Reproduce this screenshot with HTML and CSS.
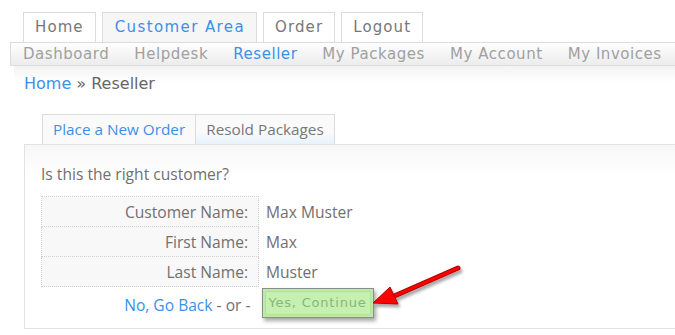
FILE: index.html
```html
<!DOCTYPE html>
<html>
<head>
<meta charset="utf-8">
<link rel="stylesheet" href="styles.css">
</head>
<body>
<div class="page">
  <ul class="topnav">
    <li class="tab">Home</li>
    <li class="tab active">Customer Area</li>
    <li class="tab">Order</li>
    <li class="tab">Logout</li>
  </ul>
  <ul class="subnav">
    <li>Dashboard</li>
    <li>Helpdesk</li>
    <li class="current">Reseller</li>
    <li>My Packages</li>
    <li>My Account</li>
    <li>My Invoices</li>
  </ul>
  <div class="shade"></div>
  <div class="crumbs"><a class="link">Home</a> » Reseller</div>
  <ul class="subtabs">
    <li class="stab sel">Place a New Order</li>
    <li class="stab other">Resold Packages</li>
  </ul>
  <div class="box">
    <p class="question">Is this the right customer?</p>
    <table class="info">
      <tr><th>Customer Name:</th><td>Max Muster</td></tr>
      <tr><th>First Name:</th><td>Max</td></tr>
      <tr><th>Last Name:</th><td>Muster</td></tr>
      <tr class="actions">
        <th><a class="link">No, Go Back</a> - or -</th>
        <td><span class="btn"><span class="btn-in">Yes, Continue</span></span></td>
      </tr>
    </table>
  </div>
  <svg class="arrow" width="110" height="60" viewBox="0 0 110 60">
    <defs>
      <filter id="sh" x="-20%" y="-20%" width="150%" height="150%">
        <feGaussianBlur in="SourceAlpha" stdDeviation="1.5"/>
        <feOffset dx="2" dy="3" result="b"/>
        <feComponentTransfer><feFuncA type="linear" slope="0.35"/></feComponentTransfer>
        <feMerge><feMergeNode/><feMergeNode in="SourceGraphic"/></feMerge>
      </filter>
    </defs>
    <g filter="url(#sh)">
      <line x1="98" y1="13" x2="32" y2="42" stroke="#b00000" stroke-width="5" stroke-linecap="round"/>
      <line x1="98" y1="13" x2="32" y2="42" stroke="#ff0000" stroke-width="3" stroke-linecap="round"/>
      <polygon points="13,48 30,32 38,49" fill="#ff0000" stroke="#b00000" stroke-width="1" stroke-linejoin="round"/>
    </g>
  </svg>
</div>
</body>
</html>
```

FILE: styles.css
```css
html, body {
  margin: 0;
  padding: 0;
  background: #fff;
  overflow: hidden;
}
.page {
  position: relative;
  width: 675px;
  height: 335px;
  overflow: hidden;
  font-family: "DejaVu Sans", sans-serif;
}
ul {
  list-style: none;
  margin: 0;
  padding: 0;
}
.topnav {
  display: flex;
  gap: 6px;
  padding: 12px 0 0 23px;
}
.tab {
  box-sizing: border-box;
  height: 30px;
  padding: 0 11px;
  border: 1px solid #dcdcdc;
  border-bottom: none;
  background: #fff;
  color: #777;
  font-size: 15px;
  letter-spacing: 1.1px;
  line-height: 28px;
}
.tab.active {
  background: #f6f6f6;
  color: #3d8fe8;
  padding: 0 11px 0 12px;
  letter-spacing: 1.4px;
}
.subnav {
  display: flex;
  margin-left: 10px;
  height: 24px;
  box-sizing: border-box;
  border: 1px solid #dcdcdc;
  border-right: none;
  background: linear-gradient(#ffffff, #f3f3f3 60%, #ececec);
  padding-left: 12px;
  gap: 25px;
  font-size: 15px;
  letter-spacing: 0.55px;
  line-height: 22px;
  color: #a0a0a0;
  white-space: nowrap;
}
.subnav .current {
  color: #3d8fe8;
}
.shade {
  margin-left: 14px;
  height: 16px;
  background: linear-gradient(#f2f2f2, #ffffff);
}
.crumbs {
  margin: -8px 0 0 24px;
  font-size: 16px;
  line-height: 20px;
  color: #666;
}
.link {
  color: #3d8fe8;
}
.subtabs {
  display: flex;
  margin: 20px 0 0 42px;
  font-family: "Open Sans", sans-serif;
  font-size: 15.3px;
}
.stab {
  box-sizing: border-box;
  height: 30px;
  line-height: 28px;
  border: 1px solid #dcdcdc;
  border-bottom: none;
  padding: 0 10px;
}
.stab.sel {
  background: #fafafa;
  color: #3d8fe8;
}
.stab.other {
  border-left: none;
  color: #777;
  background: linear-gradient(#fafafa 60%, #e6f2fc);
}
.box {
  box-sizing: border-box;
  margin-left: 24px;
  width: 700px;
  height: 185px;
  border: 1px solid #e2e2e2;
  background: linear-gradient(#f7f7f7, #ffffff 30px);
  padding: 18px 0 0 16px;
  font-family: "Open Sans", sans-serif;
  font-size: 15.6px;
  color: #707070;
}
.question {
  margin: 0 0 11px 0;
  line-height: 22px;
}
.info {
  border-collapse: collapse;
}
.info th {
  box-sizing: border-box;
  width: 217px;
  height: 30px;
  padding: 0 10px 0 0;
  text-align: right;
  font-weight: normal;
  background: #f8f8f8;
  border: 1px dotted #cfcfcf;
  line-height: 22px;
}
.info td {
  padding: 1px 0 0 7px;
  height: 30px;
  line-height: 22px;
  box-sizing: border-box;
}
.info .actions th {
  background: none;
  border: none;
  padding-right: 8px;
  height: 36px;
}
.info .actions td {
  padding: 1px 0 0 3px;
  vertical-align: top;
}
.btn {
  display: inline-block;
  box-sizing: border-box;
  width: 112px;
  height: 30px;
  padding: 2px;
  border: 1px solid #8c8c8c;
  background: #bfe9a8;
  box-shadow: 2px 3px 4px rgba(0,0,0,0.35);
  vertical-align: top;
}
.btn-in {
  display: block;
  box-sizing: border-box;
  height: 24px;
  border: 1px solid #ade39a;
  background: #c6efb2;
  border-radius: 2px;
  color: #86b872;
  font-family: "DejaVu Sans", sans-serif;
  font-size: 13px;
  letter-spacing: 0.8px;
  line-height: 22px;
  text-align: center;
}
.arrow {
  position: absolute;
  left: 360px;
  top: 255px;
}
```
